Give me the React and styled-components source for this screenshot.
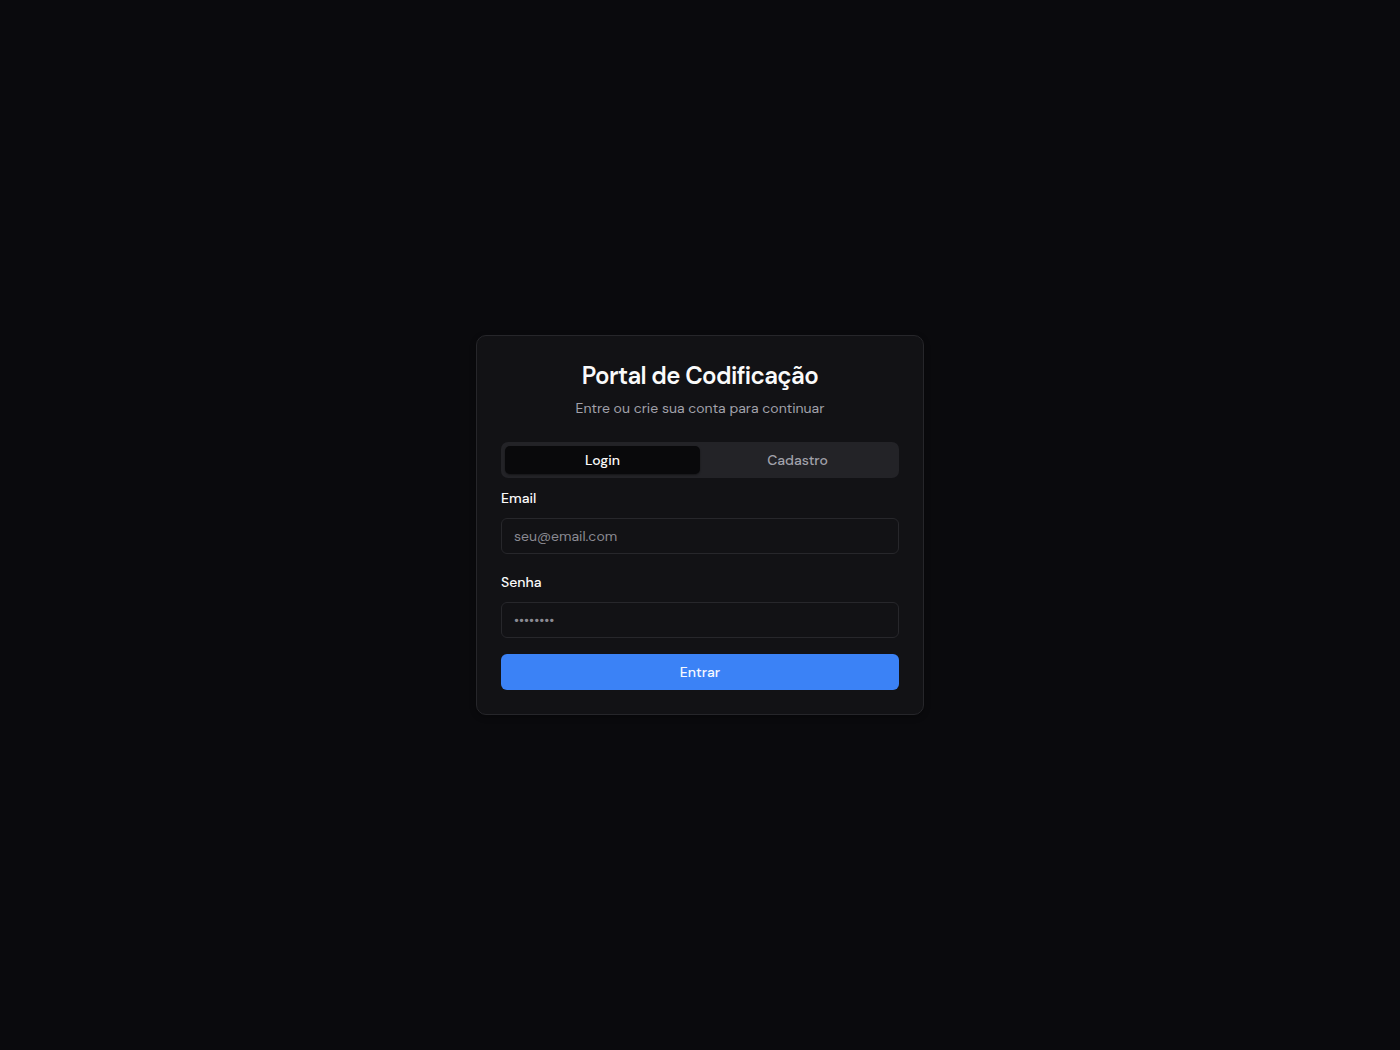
import React, { useState } from 'react';
import styled, { createGlobalStyle } from 'styled-components';

const GlobalStyle = createGlobalStyle`
  html, body {
    margin: 0;
    padding: 0;
    background: #0a0a0d;
  }
  body {
    font-family: 'DM Sans', Inter, 'Liberation Sans', sans-serif;
    color: #fafafa;
    -webkit-font-smoothing: antialiased;
  }
  * { box-sizing: border-box; }
`;

const Page = styled.div`
  min-height: 1050px;
  display: flex;
  align-items: center;
  justify-content: center;
`;

const Card = styled.div`
  width: 448px;
  margin-top: -1px;
  background: #121215;
  border: 1px solid #26262a;
  border-radius: 10px;
  padding: 24px 24px 24px;
  box-shadow: 0 2px 6px rgba(0, 0, 0, 0.3);
`;

const Header = styled.div`
  display: flex;
  flex-direction: column;
  align-items: center;
  gap: 6px;
  margin-bottom: 24px;
`;

const Title = styled.h1`
  margin: 0;
  font-size: 24px;
  line-height: 32px;
  font-weight: 600;
  letter-spacing: -0.6px;
  color: #fafafa;
`;

const Subtitle = styled.p`
  margin: 0;
  font-size: 14px;
  line-height: 20px;
  color: #a1a1aa;
`;

const Tabs = styled.div`
  display: grid;
  grid-template-columns: 1fr 1fr;
  height: 36px;
  padding: 4px;
  background: #232327;
  border-radius: 7px;
  margin-bottom: 10px;
`;

const Tab = styled.button`
  border: none;
  border-radius: 5px;
  font-family: inherit;
  font-size: 14px;
  font-weight: 500;
  cursor: pointer;
  background: ${({ $active }) => ($active ? '#09090b' : 'transparent')};
  color: ${({ $active }) => ($active ? '#fafafa' : '#a1a1aa')};
  box-shadow: ${({ $active }) => ($active ? '0 1px 2px rgba(0,0,0,0.4)' : 'none')};
`;

const Form = styled.form`
  display: flex;
  flex-direction: column;
`;

const Field = styled.div`
  display: flex;
  flex-direction: column;
  gap: 10px;
  margin-bottom: ${({ $last }) => ($last ? '16px' : '18px')};
`;

const Label = styled.label`
  font-size: 14px;
  line-height: 20px;
  font-weight: 500;
  color: #fafafa;
`;

const Input = styled.input`
  height: 36px;
  width: 100%;
  padding: 0 12px;
  background: #121215;
  border: 1px solid #27272b;
  border-radius: 6px;
  font-family: inherit;
  font-size: 14px;
  color: #a1a1aa;
  outline: none;

  &::placeholder {
    color: #8a8a92;
  }
`;

const Submit = styled.button`
  height: 36px;
  width: 100%;
  border: none;
  border-radius: 6px;
  background: #3b82f6;
  color: #f5f8ff;
  font-family: inherit;
  font-size: 14px;
  font-weight: 500;
  cursor: pointer;
`;

export default function App() {
  const [tab, setTab] = useState('login');

  return (
    <>
      <GlobalStyle />
      <Page>
        <Card>
          <Header>
            <Title>Portal de Codificação</Title>
            <Subtitle>Entre ou crie sua conta para continuar</Subtitle>
          </Header>
          <Tabs>
            <Tab type="button" $active={tab === 'login'} onClick={() => setTab('login')}>
              Login
            </Tab>
            <Tab type="button" $active={tab === 'signup'} onClick={() => setTab('signup')}>
              Cadastro
            </Tab>
          </Tabs>
          <Form onSubmit={(e) => e.preventDefault()}>
            <Field>
              <Label htmlFor="email">Email</Label>
              <Input id="email" type="email" placeholder="seu@email.com" />
            </Field>
            <Field $last>
              <Label htmlFor="senha">Senha</Label>
              <Input id="senha" type="password" placeholder="••••••••" />
            </Field>
            <Submit type="submit">Entrar</Submit>
          </Form>
        </Card>
      </Page>
    </>
  );
}
